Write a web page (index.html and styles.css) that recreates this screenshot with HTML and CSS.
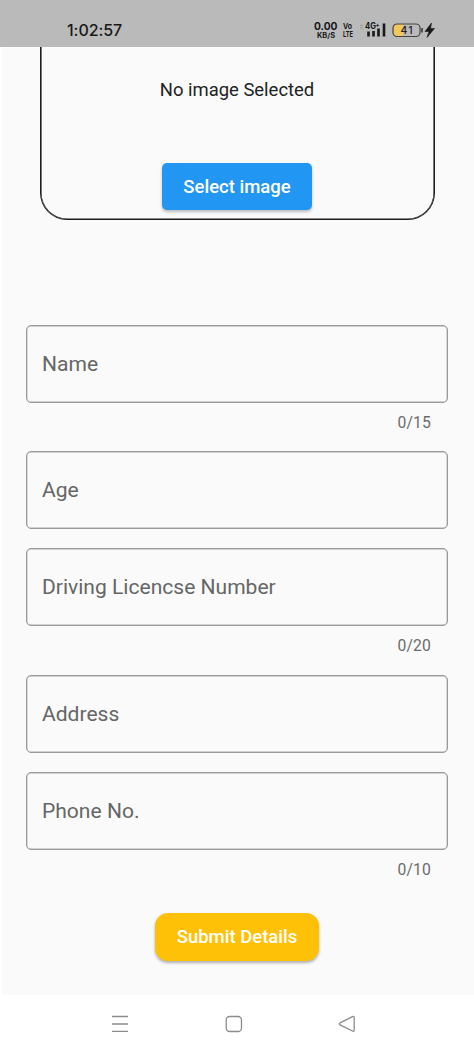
FILE: index.html
```html
<!DOCTYPE html>
<html lang="en">
<head>
<meta charset="utf-8">
<title>Driver Details</title>
<link rel="stylesheet" href="styles.css">
</head>
<body>
<div class="phone">
  <header class="status">
    <span class="clock">1:02:57</span>
    <svg class="indicators" width="122" height="22" viewBox="0 0 122 22">
      <g class="ind-text">
        <text x="0" y="11" font-size="10" textLength="23.500" lengthAdjust="spacingAndGlyphs">0.00</text>
        <text x="3" y="19" font-size="7" textLength="18" lengthAdjust="spacingAndGlyphs">KB/S</text>
        <text x="29" y="10" font-size="7.5" textLength="9" lengthAdjust="spacingAndGlyphs">Vo</text>
        <text x="29" y="17.800" font-size="7.5" textLength="10" lengthAdjust="spacingAndGlyphs">LTE</text>
        <text x="51" y="10" font-size="8.5" textLength="11" lengthAdjust="spacingAndGlyphs">4G</text>
        <text x="61.500" y="8" font-size="6">+</text>
      </g>
      <path d="M46 6.500h3M46 9h3" stroke="#999" stroke-width="1"/>
      <path d="M54.500 17.500v-5M59.500 17.500v-5.500M64.500 17.500v-8M70 17.500V4.500" stroke="#181818" stroke-width="2.600"/>
      <path d="M83 5h6v12.500h-6a4 4 0 0 1-4-4v-4.500a4 4 0 0 1 4-4z" fill="#f2c75c"/>
      <rect x="79" y="5" width="27" height="12.500" rx="4" fill="none" stroke="#444" stroke-width="1.200"/>
      <path d="M108 9v4.500" stroke="#333" stroke-width="1.500"/>
      <text x="86.500" y="15" font-size="10.500" class="level" textLength="12">41</text>
      <path d="M117.500 4l-6.500 8.500h4l-2 6 7.500-9h-4z" fill="#181818" stroke="#181818" stroke-width=".6"/>
    </svg>
  </header>
  <main class="content">
    <section class="picker">
      <p class="picker-note">No image Selected</p>
      <button class="btn btn-select"><span>Select image</span></button>
    </section>
    <form class="form">
      <div class="field"><span>Name</span></div>
      <div class="counter">0/15</div>
      <div class="field"><span>Age</span></div>
      <div class="field"><span>Driving Licencse Number</span></div>
      <div class="counter">0/20</div>
      <div class="field"><span>Address</span></div>
      <div class="field"><span>Phone No.</span></div>
      <div class="counter">0/10</div>
    </form>
    <button class="btn btn-submit"><span>Submit Details</span></button>
  </main>
  <nav class="nav">
    <svg width="18" height="18" viewBox="0 0 18 18"><path d="M1 1.500h16M1 9h16M1 16.300h16"/></svg>
    <svg width="18" height="18" viewBox="0 0 18 18"><rect x="1.200" y="1.500" width="15.300" height="15" rx="3.500"/></svg>
    <svg width="18" height="18" viewBox="0 0 18 18"><path d="M2 7.900L14.500 1.600Q16.200 .9 16.200 3v12Q16.200 17 14.500 16L2 9.900Q.7 8.900 2 7.900z"/></svg>
  </nav>
</div>
</body>
</html>
```
FILE: styles.css
```css
* { box-sizing: border-box; }
body {
  margin: 0;
  font-family: Roboto, "Liberation Sans", sans-serif;
  background: #fafafa;
}
.phone {
  display: flex;
  flex-direction: column;
  width: 474px;
  height: 1053px;
  background: #fafafa;
}
.status {
  position: relative;
  z-index: 1;
  display: flex;
  align-items: flex-start;
  justify-content: space-between;
  height: 47px;
  padding: 19px 38px 0 67px;
  background: #bababa;
}
.clock {
  font: 500 16px/22px Inter, Roboto, sans-serif;
  letter-spacing: -0.050px;
  color: #181818;
}
.ind-text {
  font-family: Inter, Roboto, sans-serif;
  font-weight: 700;
  fill: #181818;
}
.level {
  font-family: Inter, Roboto, sans-serif;
  font-weight: 500;
  fill: #222;
}
.content {
  display: flex;
  flex-direction: column;
  height: 948px;
  box-shadow: inset 2px 0 #fff;
}
.picker {
  display: flex;
  flex-direction: column;
  align-items: center;
  height: 175px;
  margin: -2px 39.500px 0;
  padding-top: 34px;
  border: 1px solid #1c1c1c;
  border-top: 0;
  border-radius: 0 0 27px 27px;
  box-shadow: inset 0 0 0 .6px #1c1c1c;
}
.picker-note {
  margin: 0 0 60px;
  font-size: 18.450px;
  line-height: 23px;
  color: #222;
}
.btn {
  padding: 0;
  border: 0;
  font: 500 18.500px/48px Roboto, sans-serif;
  color: #fff;
}
.btn-select {
  width: 150px;
  height: 47px;
  margin-top: 1px;
  border-radius: 5px;
  background: #2196f3;
  box-shadow: 0 2px 3px rgba(0, 0, 0, .25);
}
.form {
  display: flex;
  flex-direction: column;
  margin: 105px 26px 0;
}
.field {
  display: flex;
  align-items: center;
  height: 78px;
  margin-bottom: 19.400px;
  padding-left: 15px;
  border: 1px solid #999;
  border-radius: 5px;
  box-shadow: inset 0 0 0 .4px #aaa;
  font-size: 21.050px;
  line-height: 24px;
  color: #666;
}
.counter {
  height: 29px;
  margin-top: -19.400px;
  margin-bottom: 19.100px;
  padding: 10px 17px 0 0;
  text-align: right;
  font-size: 15.700px;
  line-height: 20px;
  letter-spacing: .15px;
  color: #6c6c6c;
}
.btn-submit {
  align-self: center;
  width: 164px;
  height: 48px;
  margin-top: 14.800px;
  border-radius: 13px;
  background: #ffc107;
  box-shadow: 0 2px 3px rgba(0, 0, 0, .3);
}
.nav {
  display: flex;
  justify-content: space-between;
  height: 58px;
  padding: 20px 118px 0 111px;
  background: #fff;
}
.nav svg {
  fill: none;
  stroke: #8c8c8c;
  stroke-width: 1.300;
}
```
